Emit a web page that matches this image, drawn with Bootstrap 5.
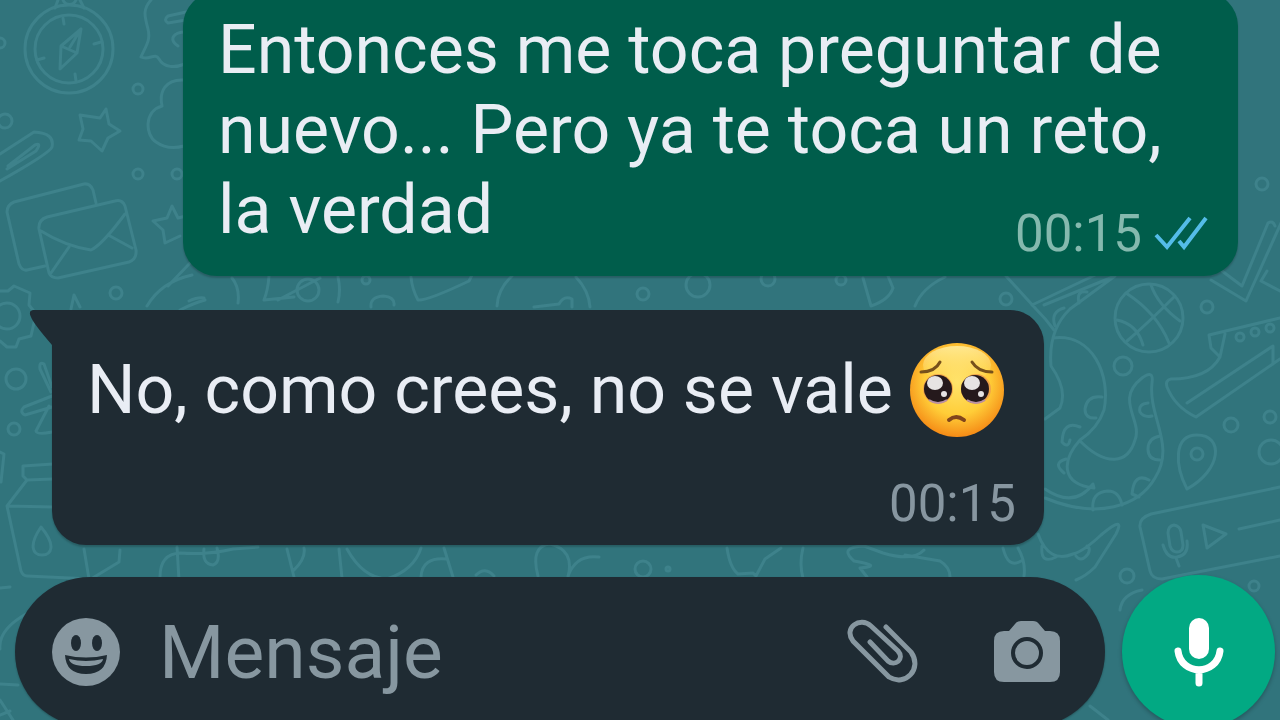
<!DOCTYPE html>
<html lang="es">
<head>
<meta charset="utf-8">
<meta name="viewport" content="width=device-width, initial-scale=1">
<title>Chat</title>
<link href="https://cdn.jsdelivr.net/npm/bootstrap@5.3.0/dist/css/bootstrap.min.css" rel="stylesheet">
<style>
body{background:#31747c;font-family:Roboto,"Liberation Sans",sans-serif;color:#e9edf4}
.wallpaper{z-index:-1;fill:none;stroke:#3e828b;stroke-width:3;stroke-linecap:round;stroke-linejoin:round}
.thread{margin-top:-8px;gap:34px}
.bubble{font-size:68px;line-height:80px;border-radius:34px;box-shadow:0 2px 2px #0003}
.sent{background:#005d4b;max-width:1055px;margin-right:42px;padding:18px 30px 12px 35px}
.received{background:#1f2b33;width:992px;max-width:90%;margin-left:52px;padding:32px 28px 11px 35px;border-top-left-radius:0}
.stamp{font-size:51px;line-height:60px}
.sent .stamp{color:#85b9ae;margin-top:-46px;gap:12px}
.received .stamp{color:#8796a0;margin-top:36px}
.tail{right:100%;top:0;margin-right:-1px}
.face{margin-left:-2px}
.composer{padding:30px 5px 0 15px;gap:17px}
.entry{background:#1f2b33;height:150px;padding:0 44px 0 36px;box-shadow:0 1px 2px #0004}
.entry input{font-size:75px;line-height:90px;color:#e9edf4;margin-left:38px;width:0;min-width:0}
.entry input::placeholder{color:#8797a0;opacity:1}
.tool{color:#8797a0;line-height:0}
.camera{margin-left:74px}
.mic{background:#02a983;width:153px;height:153px;color:#fff;box-shadow:0 2px 4px #0004}
</style>
</head>
<body class="vh-100 overflow-hidden">
<svg class="wallpaper position-fixed top-0 start-0 w-100 h-100" viewBox="0 0 1280 720" preserveAspectRatio="xMidYMid slice" aria-hidden="true">
  <!-- compass -->
  <circle cx="69" cy="49" r="44"/><circle cx="69" cy="49" r="34"/>
  <path d="M55 8l3-8M84 8l-4-8M63 0a7 7 0 0 0 13 0M81 29L61 46L60 69L77 53ZM61 46l16 7M70 47l11-18M63 18l1 6M101 42l-7 2M37 60l7-2M76 81l-1-7"/>
  <!-- stars -->
  <path d="M106 109l-6 9l-20-3l3 14l-4 11l12 1l11 10l6-13l12-7l-11-7ZM186 216l-8 2l-6-12l-5 12l-14 3l10 9l2 13l15-7"/>
  <!-- sticker and cloud -->
  <path d="M151 0c-9 10-6 17-3 29c3 12-3 18-7 28c8 4 14-5 18 2c5 9 16 9 26 5M186 12l-18 4q-5 4 0 7l18-3M186 32c-14 0-17 8-8 14M184 80c-19-1-25 12-22 26c-18 5-17 29-6 36c7 5 17 7 28 4"/>
  <!-- paper clip -->
  <path d="M0 154L34 132Q55 133 52 147Q50 153 0 181M8 166L35 145Q42 142 36 151L7 169"/>
  <!-- envelopes -->
  <path d="M45 266l-18 4q-5 1-8-6L7 212q0-7 7-10l70-18q6-1 9 6l3 13"/>
  <path d="M47 217l68-16q7-2 10 5l11 44q1 9-7 12l-71 16q-7 0-9-5L39 229q-1-9 8-12ZM41 231q24 15 50 19q11-5 34-36M51 273l18-26M110 236l22 12"/>
  <!-- gear -->
  <circle cx="7" cy="316" r="13"/>
  <path d="M0 291h8l6-5l16 7l-1 12l7 9l-5 22l-12 3l-3 8h-9l-7-6M71 309l3-14l6 12M147 306q14-24 45-31M168 286l23-24M180 310q14-7 25-10"/>
  <circle cx="138" cy="89" r="5"/><circle cx="5" cy="121" r="7"/><circle cx="138" cy="174" r="5"/><circle cx="177" cy="174" r="5"/><circle cx="116" cy="293" r="6"/><circle cx="0" cy="43" r="5"/>
  <!-- left edge -->
  <circle cx="16" cy="379" r="10"/><circle cx="14" cy="429" r="6"/>
  <path d="M52 387l-8-23q-5-3-4 5l11 23M52 396l-28 11q-5 5 1 8l27-8M49 406l-13 25q1 4 16 1M0 452l4 2l-3 28"/>
  <path d="M53 464l-30 2v10l4 4L7 506l14 65q2 5 6 5l64 3l28-17l1-12M27 480l26-1M7 506l46 1M84 549l5 30"/>
  <path d="M41 527c-13 19-8 28 1 28s15-9-1-28ZM0 588l10-1M26 614q-28 16-26 35M0 684l18 1M0 700l13 20M0 715l10-4"/>
  <!-- strip between the bubbles -->
  <path d="M189 301q9-4 15-3M232 278q8 10 6 25M269 276q-1 14-5 24l30-3M278 300l42-22M338 277q3 13 0 25M411 277q1 12 7 23q9 1 51-19l3-6M371 307q-1-10 12-11q12 1 11 9M497 306q1-17 15-30M576 277q13 14 14 30M534 307l25-3q5-9 13-5v8M863 278l8 28q18-6 22-18l-5-12M915 306q7-18 30-29M1006 276l30 33q10 10 18 21M1032 305l80-38"/>
  <circle cx="308" cy="290" r="11"/><circle cx="366" cy="280" r="4"/><circle cx="643" cy="294" r="6"/><circle cx="698" cy="285" r="12"/><circle cx="768" cy="279" r="7"/><circle cx="841" cy="280" r="5"/><circle cx="1006" cy="299" r="6"/>
  <!-- tentacles -->
  <path d="M1044 305L1115 276L1070 309Q1048 330 1051 366Q1068 390 1060 408L1045 419M1053 338C1093 333 1111 376 1104 410Q1098 428 1080 440C1062 460 1060 484 1094 488l-1-4q-19 25-48 5M1080 441C1106 467 1128 464 1135 440C1143 420 1114 400 1142 378q12-9 10 5c-4 34 24 62 3 95c-16 28-57 42-110 20"/>
  <path d="M1055 326q-5-14 9-18M1079 303q-3-13 8-11M1102 397q-15-2-17 12q0 10 11 9M1080 427q-17-7-18 15q6 7 8-2M1066 459q-14 4-2 14M1148 403q-10 1-8 9q4 6 12 4M1160 436q-12 2-12 13q0 11 12 11M1149 480q-15-8-17 14l7 3M1093 510q-2-18 15-19q11 0 14 14M1038 534q11 30 35 20q11-3 28-19q25-21 15-1l-21 33q-9 9-19 13M1042 546q-2 19 14 11M1076 556q5 7 12-2q3-6-1-8"/>
  <!-- basketball -->
  <circle cx="1149" cy="318" r="34"/>
  <path d="M1126 293q31 20 43 50M1127 341q20-17 48-45M1151 285q7 20 29 36M1117 320q20 4 26 25"/>
  <!-- pencil and shoe -->
  <path d="M1211 280l35 21l35-78M1222 271l20 15l26-63q5-3 7 3M1280 291l-19-10l6-10M1280 318l-71 17l2 13l9 9l5-23M1220 357q-12 22-49 22q-6 1-4 8q8 20 29 30l84-58M1187 403l86-57v18"/>
  <circle cx="1240" cy="337" r="4"/><circle cx="1255" cy="332" r="4"/><circle cx="1270" cy="328" r="4"/><circle cx="1207" cy="307" r="6"/><circle cx="1123" cy="366" r="9"/><circle cx="1231" cy="425" r="7"/><circle cx="1270" cy="417" r="6"/><circle cx="1271" cy="452" r="12"/><circle cx="1262" cy="184" r="6"/><circle cx="1127" cy="576" r="7"/>
  <!-- location pin -->
  <path d="M1187 489c-12-23-14-54 10-54c27 0 25 35-10 54Z"/><circle cx="1197" cy="454" r="6"/>
  <!-- voice message -->
  <path d="M1280 487l-129 27q-12 4-11 13l10 44q2 8 12 8l118-23M1168 533q0-7 6-8q6 1 7 7l2 13q0 7-6 7q-5 0-7-6ZM1163 545q4 14 14 12q12-2 10-16M1176 558l3 8M1203 525l4 23l19-14ZM1239 529l41-9"/>
  <!-- strip above the composer -->
  <path d="M160 577q0-23 20-24q28 2 53-4l25-2M177 547l2 33M204 549q-2 15 9 16q8-3 4-17M287 549l7 28M294 570q12-12 10-22M339 549l3 29M347 549q16 29 40 30q27-9 34-31M421 577q1-20 25-18M444 548l9 29M476 575q9-9 18 1M538 576q-8-30 12-32q25 6 18 33M568 576q8-22 31-19M727 548q3 20 11 26l15-1l3 3l9-17l16-11M803 548q-4 16 0 30M867 577l-7-9q24-2-6-7q-16-14 10-15l19 7q30 9 41-3M905 555l35 6q10 6 10 16M1003 548q5 21 18 13M1018 548q8 14 6 28M1142 590q-20 4-22 20M1090 706l18 14"/>
  <circle cx="643" cy="569" r="8"/><circle cx="668" cy="569" r="2"/><circle cx="1254" cy="586" r="5"/>
</svg>

<main class="thread d-flex flex-column">
  <article class="bubble sent align-self-end">
    <div>Entonces me toca preguntar de nuevo... Pero ya te toca un reto, la verdad</div>
    <div class="stamp d-flex justify-content-end align-items-center">
      <time>00:15</time>
      <svg width="54" height="38" viewBox="0 0 54 38" fill="none" stroke="#54bce8" stroke-width="4" role="img" aria-label="Leído"><path d="M2 20L13 32L36 3M25 26L30 32L52 3"/></svg>
    </div>
  </article>
  <article class="bubble received position-relative">
    <svg class="tail position-absolute" width="24" height="38" viewBox="0 0 24 38" fill="#1f2b33" aria-hidden="true"><path d="M24 0H4Q-1 1 2 7Q4 13 23 35L24 38Z"/></svg>
    <div class="d-flex align-items-center">
      <span class="text-nowrap">No, como crees, no se vale&nbsp;</span>
      <svg class="face flex-shrink-0" width="98" height="96" viewBox="0 0 98 96" role="img" aria-label="Cara suplicante">
        <defs>
          <radialGradient id="skin" cx=".5" cy=".42" r=".58"><stop offset="0" stop-color="#ffe36a"/><stop offset=".6" stop-color="#ffcd38"/><stop offset="1" stop-color="#f58b16"/></radialGradient>
          <linearGradient id="shine" x2="0" y2="1"><stop offset="0" stop-color="#fff0a8" stop-opacity=".8"/><stop offset="1" stop-color="#ffe480" stop-opacity="0"/></linearGradient>
        </defs>
        <circle cx="49" cy="48" r="47" fill="url(#skin)"/>
        <ellipse cx="49" cy="23" rx="34" ry="19" fill="url(#shine)"/>
        <g fill="#f0a44a"><circle cx="30" cy="47" r="15"/><circle cx="68" cy="47" r="15"/></g>
        <g fill="#25191c"><circle cx="30" cy="47" r="14"/><circle cx="67" cy="47" r="14"/></g>
        <g fill="#e6e3e3"><ellipse cx="27" cy="41" rx="8" ry="7"/><ellipse cx="64" cy="41" rx="8" ry="7"/><circle cx="36" cy="52" r="3"/><circle cx="73" cy="52" r="3"/></g>
        <path d="M21 58q9 6 18 0M59 58q9 6 18 0" fill="none" stroke="#b991a3" stroke-width="2"/>
        <path d="M13 30Q27 30 32 20M64 20Q70 30 84 30" fill="none" stroke="#76501b" stroke-width="3" stroke-linecap="round"/>
        <path d="M41 78Q48 72 56 78" fill="none" stroke="#81451c" stroke-width="4" stroke-linecap="round"/>
      </svg>
    </div>
    <div class="stamp text-end"><time>00:15</time></div>
  </article>
</main>

<form class="composer d-flex align-items-center">
  <div class="entry d-flex flex-grow-1 align-items-center rounded-pill">
    <button class="tool btn p-0 border-0" type="button" aria-label="Emojis">
      <svg width="70" height="70" viewBox="0 0 70 70"><circle cx="35" cy="35" r="34" fill="currentColor"/><g fill="#1f2b33"><ellipse cx="25" cy="26" rx="5" ry="8"/><ellipse cx="46" cy="26" rx="5" ry="8"/><path d="M14 38Q35 43 56 38Q55 57 35 57Q15 57 14 38Z"/></g><path d="M18 42Q35 46 52 42Q51 49 35 49Q19 49 18 42Z" fill="currentColor"/></svg>
    </button>
    <input class="flex-grow-1 bg-transparent border-0 p-0" type="text" placeholder="Mensaje" aria-label="Mensaje">
    <button class="tool btn p-0 border-0" type="button" aria-label="Adjuntar">
      <svg width="72" height="66" viewBox="0 0 72 66" fill="none" stroke="currentColor" stroke-width="5" stroke-linecap="round"><path d="M39 8L64 33C76 50 58 68 42 58L6 22C-4 9 13-3 24 7L51 32C58 40 48 48 41 42L23 23"/></svg>
    </button>
    <button class="camera tool btn p-0 border-0" type="button" aria-label="Cámara">
      <svg width="68" height="66" viewBox="0 0 68 66"><path d="M11 12H16L22 5Q24 2 28 2H40Q44 2 46 5L52 12H57Q67 12 67 22V53Q67 63 57 63H11Q1 63 1 53V22Q1 12 11 12Z" fill="currentColor"/><circle cx="34" cy="34" r="14" fill="none" stroke="#1f2b33" stroke-width="4"/></svg>
    </button>
  </div>
  <button class="mic btn rounded-circle border-0 p-0 flex-shrink-0" type="button" aria-label="Grabar audio">
    <svg width="52" height="72" viewBox="0 0 52 72"><rect x="16" y="2" width="20" height="41" rx="10" fill="currentColor"/><path d="M5 35C8 60 44 60 47 35M26 54V67" fill="none" stroke="currentColor" stroke-width="7" stroke-linecap="round"/></svg>
  </button>
</form>
<script src="https://cdn.jsdelivr.net/npm/bootstrap@5.3.0/dist/js/bootstrap.bundle.min.js"></script>
</body>
</html>
